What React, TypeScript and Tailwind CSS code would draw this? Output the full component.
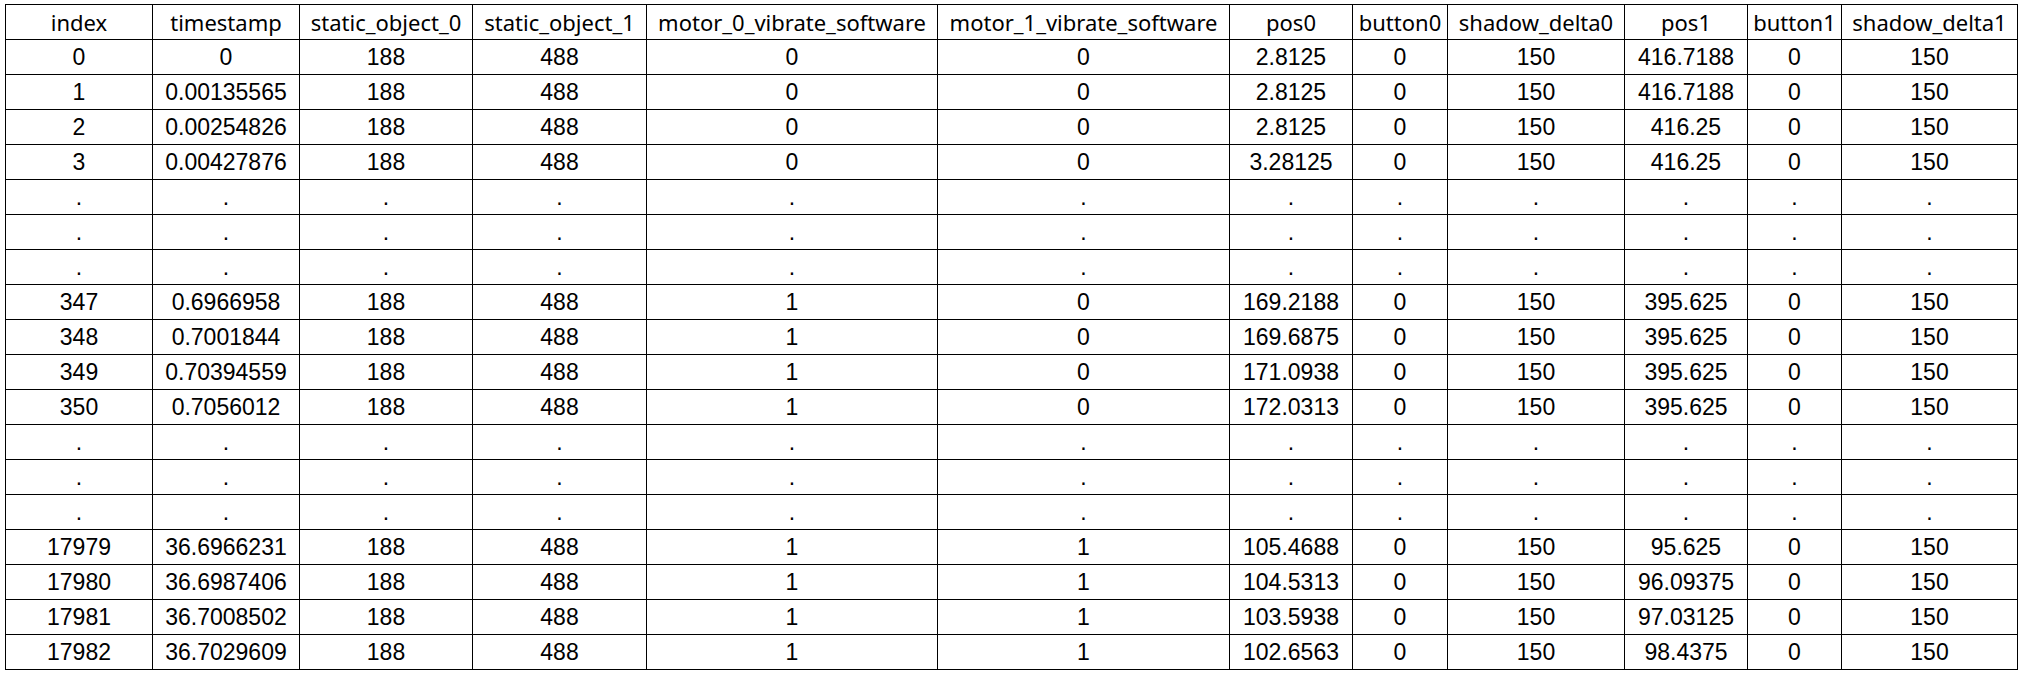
const headers = [
  "index",
  "timestamp",
  "static_object_0",
  "static_object_1",
  "motor_0_vibrate_software",
  "motor_1_vibrate_software",
  "pos0",
  "button0",
  "shadow_delta0",
  "pos1",
  "button1",
  "shadow_delta1",
];

const widths = [147, 147, 173, 174, 291, 292, 123, 95, 177, 123, 94, 176];

const dots = Array(12).fill(".");

const rows: string[][] = [
  ["0", "0", "188", "488", "0", "0", "2.8125", "0", "150", "416.7188", "0", "150"],
  ["1", "0.00135565", "188", "488", "0", "0", "2.8125", "0", "150", "416.7188", "0", "150"],
  ["2", "0.00254826", "188", "488", "0", "0", "2.8125", "0", "150", "416.25", "0", "150"],
  ["3", "0.00427876", "188", "488", "0", "0", "3.28125", "0", "150", "416.25", "0", "150"],
  dots,
  dots,
  dots,
  ["347", "0.6966958", "188", "488", "1", "0", "169.2188", "0", "150", "395.625", "0", "150"],
  ["348", "0.7001844", "188", "488", "1", "0", "169.6875", "0", "150", "395.625", "0", "150"],
  ["349", "0.70394559", "188", "488", "1", "0", "171.0938", "0", "150", "395.625", "0", "150"],
  ["350", "0.7056012", "188", "488", "1", "0", "172.0313", "0", "150", "395.625", "0", "150"],
  dots,
  dots,
  dots,
  ["17979", "36.6966231", "188", "488", "1", "1", "105.4688", "0", "150", "95.625", "0", "150"],
  ["17980", "36.6987406", "188", "488", "1", "1", "104.5313", "0", "150", "96.09375", "0", "150"],
  ["17981", "36.7008502", "188", "488", "1", "1", "103.5938", "0", "150", "97.03125", "0", "150"],
  ["17982", "36.7029609", "188", "488", "1", "1", "102.6563", "0", "150", "98.4375", "0", "150"],
];

export default function App() {
  return (
    <div className="min-h-[676px] w-[2025px] bg-white pl-[5px] pt-[4px] text-black">
      <table className="w-[2013px] table-fixed border-collapse">
        <colgroup>
          {widths.map((w, i) => (
            <col key={i} style={{ width: w }} />
          ))}
        </colgroup>
        <thead>
          <tr className="h-[35px]">
            {headers.map((h) => (
              <th
                key={h}
                className="whitespace-nowrap border border-black p-0 text-center text-[22px] font-normal leading-none font-['Noto_Sans',sans-serif]"
              >
                {h}
              </th>
            ))}
          </tr>
        </thead>
        <tbody>
          {rows.map((r, i) => (
            <tr key={i} className="h-[35px]">
              {r.map((c, j) => (
                <td
                  key={j}
                  className="whitespace-nowrap border border-black p-0 text-center text-[23px] leading-none font-['Liberation_Sans',Arial,sans-serif]"
                >
                  {c}
                </td>
              ))}
            </tr>
          ))}
        </tbody>
      </table>
    </div>
  );
}
